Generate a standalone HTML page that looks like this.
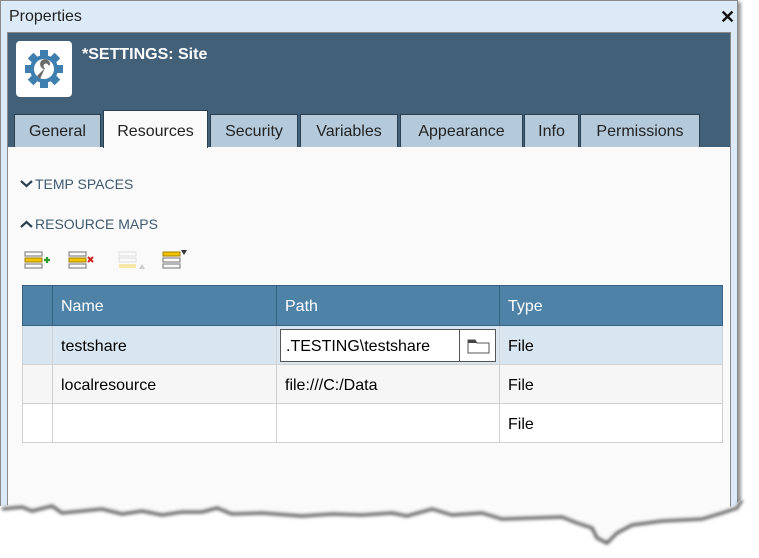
<!DOCTYPE html>
<html><head><meta charset="utf-8"><style>
*{margin:0;padding:0;box-sizing:border-box}
body{width:759px;height:558px;background:#fff;position:relative;overflow:hidden;font-family:"Liberation Sans",sans-serif}
.win{position:absolute;left:0;top:0;width:738px;height:540px;background:#dce9f7;border:1px solid #8a8a8a;box-shadow:3px 2px 3px #999}
.title{position:absolute;left:8px;top:7px;font-size:16px;color:#222}
.x{position:absolute;left:719px;top:6px;font-size:18px;font-weight:bold;color:#111}
.inner{position:absolute;left:7px;top:32px;width:724px;height:520px;border:1px solid #8a8a8a;background:#fafafa}
.hdr{position:absolute;left:0;top:0;width:722px;height:114px;background:#436079}
.icon{position:absolute;left:8px;top:8px;width:56px;height:56px;background:#fff;border-radius:4px}
.ttl{position:absolute;left:74px;top:13px;color:#fff;font-weight:bold;font-size:16px}
.tab{position:absolute;top:81px;height:33px;background:#b4cadb;border:1px solid #2c3f50;border-bottom:none;font-size:16px;color:#222;text-align:center;line-height:33px}
.tab.act{top:77px;height:38px;background:#fafafa;line-height:42px}
.sec{position:absolute;left:12px;font-size:14px;color:#3f5a70}
.sec svg{vertical-align:1px;margin-right:2px}
table{position:absolute;left:14px;top:252px;border-collapse:collapse;width:701px;font-size:16px}
td,th{border:1px solid #d0d0d0;height:39px;text-align:left;padding-left:8px;font-weight:normal;padding-top:4px}
th{background:#4f82a7;color:#fff;border-color:#3b6182;height:40px;padding-top:3px}
tr.sel td{background:#d7e6f1}
</style></head><body>
<div class="win">
<div class="title">Properties</div>
<div class="x">✕</div>
</div>
<div class="inner">
<div class="hdr">
<div class="icon"><svg width="56" height="56" viewBox="0 0 56 56"><g transform="translate(28,28)" fill="#3f7fb0"><circle r="14"/><g id="t"><rect x="-4" y="-19" width="8" height="8"/></g><use href="#t" transform="rotate(45)"/><use href="#t" transform="rotate(90)"/><use href="#t" transform="rotate(135)"/><use href="#t" transform="rotate(180)"/><use href="#t" transform="rotate(225)"/><use href="#t" transform="rotate(270)"/><use href="#t" transform="rotate(315)"/><circle r="10" fill="#fff"/><path d="M-7 7 L0 0 A5 5 0 1 1 6 -4 L3 -3 L1 -1 L-4 10Z" fill="#6a6a6a"/><circle cx="2" cy="-3" r="2.5" fill="#fff"/></g></svg></div>
<div class="ttl">*SETTINGS: Site</div>
<div class="tab" style="left:6px;width:87px">General</div>
<div class="tab act" style="left:95px;width:105px">Resources</div>
<div class="tab" style="left:202px;width:88px">Security</div>
<div class="tab" style="left:292px;width:98px">Variables</div>
<div class="tab" style="left:392px;width:123px">Appearance</div>
<div class="tab" style="left:516px;width:55px">Info</div>
<div class="tab" style="left:572px;width:120px">Permissions</div>
</div>
<div class="sec" style="top:143px"><svg width="13" height="8"><path d="M1 1l5.5 5 5.5-5" fill="none" stroke="#2c4356" stroke-width="2.2"/></svg>TEMP SPACES</div>
<div class="sec" style="top:183px"><svg width="13" height="8"><path d="M1 7l5.5-5 5.5 5" fill="none" stroke="#2c4356" stroke-width="2.2"/></svg>RESOURCE MAPS</div>
<svg style="position:absolute;left:14px;top:216px" width="170" height="30">
<g fill="none" stroke="#888" stroke-width="1.2"><rect x="3" y="3" width="17" height="4"/><rect x="3" y="15" width="17" height="4"/><rect x="47" y="3" width="17" height="4"/><rect x="47" y="15" width="17" height="4"/><rect x="141" y="9" width="17" height="4"/><rect x="141" y="15" width="17" height="4"/></g>
<rect x="3" y="9" width="17" height="4" fill="#f3c400" stroke="#a08000"/><rect x="47" y="9" width="17" height="4" fill="#f3c400" stroke="#a08000"/><rect x="141" y="3" width="17" height="4" fill="#f3c400" stroke="#a08000"/>
<path d="M22 11h6M25 8v6" stroke="#2a9a2a" stroke-width="2.2"/><path d="M66 8l5 5M71 8l-5 5" stroke="#d02020" stroke-width="2"/>
<g stroke="#ddd" fill="none"><rect x="97" y="3" width="17" height="4"/><rect x="97" y="9" width="17" height="4"/></g><rect x="97" y="15" width="17" height="4" fill="#f5e9a8"/><path d="M117 20l3-5 3 5z" fill="#ccc"/>
<path d="M159 1l3 5 3-5z" fill="#333"/></svg>
<table>
<tr><th style="width:30px"></th><th style="width:224px">Name</th><th style="width:223px">Path</th><th>Type</th></tr>
<tr class="sel"><td></td><td>testshare</td><td style="padding:2px 3px;background:#d7e6f1"><div style="background:#fff;border:1px solid #555;height:33px;line-height:33px;padding-left:5px;position:relative">.TESTING\testshare<span style="position:absolute;right:0;top:0;width:36px;height:31px;border-left:1px solid #555;"><svg width="36" height="31"><path d="M8 10h7l2 3h12v10H8z" fill="#fff" stroke="#555"/><path d="M8 10h7l2 3H8z" fill="#444"/></svg></span></div></td><td>File</td></tr>
<tr style="background:#f6f6f6"><td></td><td>localresource</td><td>file:///C:/Data</td><td>File</td></tr>
<tr style="background:#fff"><td></td><td></td><td></td><td>File</td></tr>
</table>
</div>
<svg style="position:absolute;left:0;top:0" width="759" height="558">
<defs><filter id="b" x="-5%" y="-50%" width="110%" height="200%"><feGaussianBlur stdDeviation="1.5"/></filter></defs>
<path fill="#fff" d="M0 506 L20 504 L30 508 L50 503 L60 510 L80 508 L100 506 L120 511 L140 508 L160 512 L180 509 L200 509 L215 505 L230 511 L260 510 L300 513 L330 511 L360 512 L390 510 L405 513 L430 506 L450 512 L480 510 L500 516 L530 515 L560 514 L575 520 L590 525 L595 535 L605 540 L615 530 L630 522 L660 518 L700 516 L720 510 L735 505 L745 495 L759 495 L759 558 L0 558Z"/>
<path filter="url(#b)" fill="none" stroke="#555" stroke-width="3" transform="translate(2,3)" d="M0 506 L20 504 L30 508 L50 503 L60 510 L80 508 L100 506 L120 511 L140 508 L160 512 L180 509 L200 509 L215 505 L230 511 L260 510 L300 513 L330 511 L360 512 L390 510 L405 513 L430 506 L450 512 L480 510 L500 516 L530 515 L560 514 L575 520 L590 525 L595 535 L605 540 L615 530 L630 522 L660 518 L700 516 L720 510 L735 505 L740 497"/>
</svg>
</body></html>
